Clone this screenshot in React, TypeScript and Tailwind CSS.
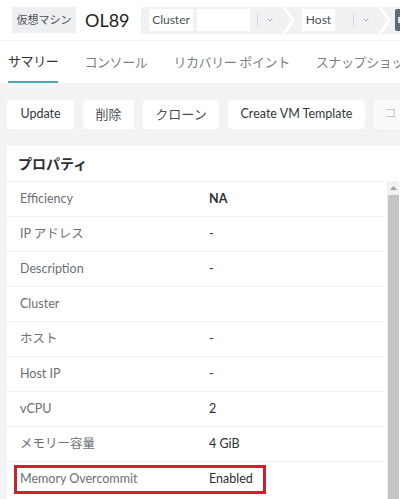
import React from "react";

const font = { fontFamily: 'Lato, "Noto Sans CJK JP", sans-serif' };

const rows: { label: string; value: string; strong?: boolean; marked?: boolean }[] = [
  { label: "Efficiency", value: "NA", strong: true },
  { label: "IP アドレス", value: "-" },
  { label: "Description", value: "-" },
  { label: "Cluster", value: "" },
  { label: "ホスト", value: "-" },
  { label: "Host IP", value: "-" },
  { label: "vCPU", value: "2" },
  { label: "メモリー容量", value: "4 GiB" },
  { label: "Memory Overcommit", value: "Enabled", marked: true },
];

function Chevron() {
  return (
    <svg width="8" height="6" viewBox="0 0 8 6" className="shrink-0">
      <path d="M1.5 1.5 L4 4 L6.5 1.5" fill="none" stroke="#a3a8ae" strokeWidth="1" />
    </svg>
  );
}

function Arrow() {
  return (
    <svg width="14" height="27" viewBox="0 0 14 27" className="shrink-0">
      <path d="M2 0 L11 13.5 L2 27" fill="none" stroke="#ffffff" strokeWidth="3" />
    </svg>
  );
}

export default function App() {
  return (
    <div className="h-[499px] w-[400px] overflow-hidden bg-[#f2f3f5]" style={font}>
      {/* header */}
      <div className="flex h-[40px] items-center bg-white pl-[12px]">
        <div className="flex h-[26px] w-[64px] shrink-0 items-center justify-center bg-[#eeeff1] text-[11px] text-[#4a4f55]">
          仮想マシン
        </div>
        <div className="ml-[9px] w-[56px] shrink-0 text-[18px] text-[#222]">OL89</div>
        <div className="flex h-[27px] shrink-0 items-center rounded-l-[3px] bg-[#f0f1f3] pl-[8px]">
          <div className="flex h-[22px] w-[44px] items-center justify-center bg-white text-[12px] text-[#4a4f55]">
            Cluster
          </div>
          <div className="ml-[4px] h-[22px] w-[53px] bg-white" />
          <div className="ml-[7px] h-[14px] w-px bg-[#d5d8dc]" />
          <div className="ml-[8px]">
            <Chevron />
          </div>
          <div className="ml-[8px]">
            <Arrow />
          </div>
          <div className="ml-[6px] flex h-[22px] w-[33px] items-center justify-center bg-white text-[12px] text-[#4a4f55]">
            Host
          </div>
          <div className="ml-[18px] h-[14px] w-px bg-[#d5d8dc]" />
          <div className="ml-[8px]">
            <Chevron />
          </div>
          <div className="ml-[8px]">
            <Arrow />
          </div>
          <div className="ml-[3px] flex h-[22px] w-[30px] items-center rounded-[2px] bg-[#5d6a77] pl-[3px]">
            <div className="h-[6px] w-[4px] bg-[#dfe3e7]" />
          </div>
        </div>
      </div>

      {/* tabs */}
      <div className="flex h-[43px] items-stretch gap-[26px] border-t border-[#f3f4f6] bg-white pl-[8px] text-[13px] tracking-[-0.4px] whitespace-nowrap">
        <div className="flex items-center border-b-2 border-[#4fa3b1] pt-[2px] text-[#2d3238]">サマリー</div>
        <div className="flex items-center pt-[2px] text-[#7a8087]">コンソール</div>
        <div className="flex items-center pt-[2px] text-[#7a8087]">リカバリー ポイント</div>
        <div className="flex items-center pt-[2px] text-[#7a8087]">スナップショッ</div>
      </div>

      {/* actions */}
      <div className="flex gap-[9px] whitespace-nowrap pl-[7px] pt-[17px] text-[12.5px] text-[#32373c]">
        <div className="flex h-[29px] w-[67px] shrink-0 items-center justify-center rounded-[3px] bg-white">Update</div>
        <div className="flex h-[29px] w-[51px] shrink-0 items-center justify-center rounded-[3px] bg-white text-[13px] text-[#4a4f55]">削除</div>
        <div className="flex h-[29px] w-[76px] shrink-0 items-center justify-center rounded-[3px] bg-white text-[13px] text-[#4a4f55]">クローン</div>
        <div className="flex h-[29px] w-[137px] shrink-0 items-center justify-center rounded-[3px] bg-white">Create VM Template</div>
        <div className="flex h-[29px] w-[80px] shrink-0 items-center rounded-[3px] bg-[#fafafb] pl-[10px] text-[#c5c9cd]">コ</div>
      </div>

      {/* properties panel */}
      <div className="ml-[7px] mt-[17px] w-[420px] bg-white">
        <div className="flex h-[35px] items-center pl-[11px] text-[14px] font-bold text-[#2b2f33]">プロパティ</div>
        <div className="flex">
          <div className="w-[377px]">
            {rows.map((r) => (
              <div
                key={r.label}
                className="relative flex h-[35px] items-center border-t border-[#eceef0] pl-[13px] text-[12.5px]"
              >
                <div className="w-[189px] shrink-0 text-[#6a6f76]">{r.label}</div>
                <div className={r.strong ? "font-bold text-[#2b2f33]" : "text-[#2b2f33]"}>{r.value}</div>
                {r.marked && (
                  <div className="absolute left-[7px] top-[3px] h-[29px] w-[252px] border-[3px] border-[#d21f2e]" />
                )}
              </div>
            ))}
          </div>
          <div className="ml-[3px] flex w-[12px] flex-col items-center bg-[#f1f1f1] pt-[2px]">
            <svg width="7" height="5" viewBox="0 0 7 5" className="mt-[2px]">
              <path d="M0 5 L3.5 1 L7 5 Z" fill="#a3a3a3" />
            </svg>
            <div className="mt-[5px] h-[320px] w-[11px] bg-[#c4c4c4]" />
          </div>
        </div>
      </div>
    </div>
  );
}
